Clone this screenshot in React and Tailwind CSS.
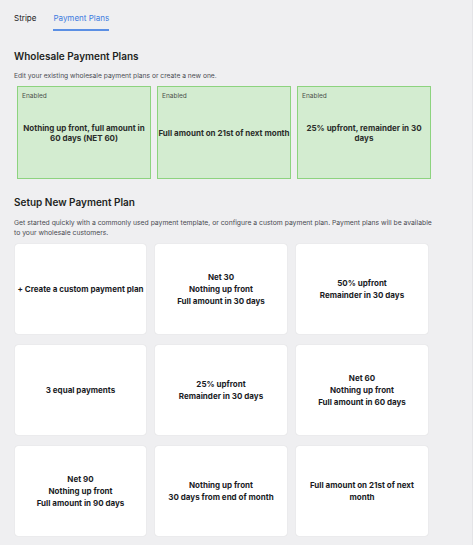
import React from "react";

const enabledPlans = [
  ["Nothing up front, full amount in", "60 days (NET 60)"],
  ["Full amount on 21st of next month"],
  ["25% upfront, remainder in 30", "days"],
];

const templates = [
  ["+ Create a custom payment plan"],
  ["Net 30", "Nothing up front", "Full amount in 30 days"],
  ["50% upfront", "Remainder in 30 days"],
  ["3 equal payments"],
  ["25% upfront", "Remainder in 30 days"],
  ["Net 60", "Nothing up front", "Full amount in 60 days"],
  ["Net 90", "Nothing up front", "Full amount in 90 days"],
  ["Nothing up front", "30 days from end of month"],
  ["Full amount on 21st of next", "month"],
];

const EnabledCard = ({ lines }) => (
  <div className="flex flex-col h-[93px] bg-[#d3ecd0] border border-[#8dd37f] px-[4px] pt-[6px]">
    <span className="text-[6.5px] text-[#4b4f4b] leading-[7px]">Enabled</span>
    <div className="flex flex-1 flex-col items-center justify-center pb-[13px] text-center text-[8px] leading-[10px] font-bold text-[#2b2e2b]">
      {lines.map((line) => (
        <span key={line} className="whitespace-nowrap">{line}</span>
      ))}
    </div>
  </div>
);

const TemplateCard = ({ lines }) => (
  <div className="flex flex-col items-center justify-center h-[90px] bg-white rounded-[3px] shadow-[0_0_1px_rgba(0,0,0,0.18)] text-center text-[8px] leading-[12px] font-bold text-[#1a1c1f]">
    {lines.map((line) => (
      <span key={line} className="whitespace-nowrap">{line}</span>
    ))}
  </div>
);

export default function App() {
  return (
    <div className="w-[474px] h-[548px] bg-white font-['Inter',sans-serif]">
      <div className="w-[473px] h-[545px] bg-[#efeff1] border-r border-[#e4e4e7] pt-[12px]">
        <div className="flex gap-[17px] px-[14px] text-[8px] leading-[12px]">
          <span className="text-[#222]">Stripe</span>
          <span className="text-[#3d7be0] border-b-2 border-[#5b8fe4] pb-[5px]">Payment Plans</span>
        </div>

        <div className="px-[14px] mt-[18px]">
          <h2 className="text-[10px] leading-[14px] font-semibold text-[#1d1f22]">Wholesale Payment Plans</h2>
          <p className="mt-[8px] text-[6.7px] leading-[10px] text-[#4a4c52]">
            Edit your existing wholesale payment plans or create a new one.
          </p>
        </div>

        <div className="grid grid-cols-[134px_134px_134px] gap-[6px] ml-[17px] mt-[5px]">
          {enabledPlans.map((p) => (
            <EnabledCard key={p[0]} lines={p} />
          ))}
        </div>

        <div className="px-[14px] mt-[16px]">
          <h2 className="text-[10px] leading-[14px] font-semibold text-[#1d1f22]">Setup New Payment Plan</h2>
          <p className="mt-[9px] w-[418px] text-[6.8px] leading-[10px] text-[#4a4c52]">
            Get started quickly with a commonly used payment template, or configure a custom payment plan. Payment plans will be available to your wholesale customers.
          </p>
        </div>

        <div className="grid grid-cols-[131px_132px_132px] gap-x-[9px] gap-y-[11px] ml-[15px] mt-[6px]">
          {templates.map((t, i) => (
            <TemplateCard key={i} lines={t} />
          ))}
        </div>
      </div>
    </div>
  );
}
